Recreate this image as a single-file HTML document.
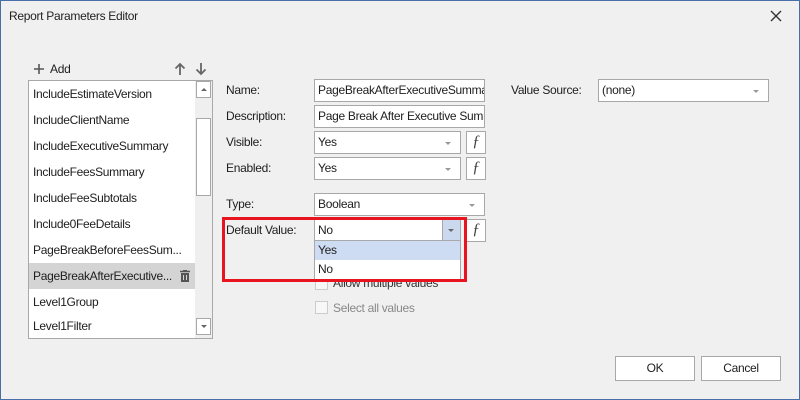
<!DOCTYPE html>
<html><head><style>
*{margin:0;padding:0;box-sizing:border-box}
body{width:800px;height:400px;background:#f0f0f0;font-family:"Liberation Sans",sans-serif;font-size:12px;letter-spacing:-0.3px;color:#202020;position:relative;overflow:hidden}
.a{position:absolute}
.frame{left:0;top:0;width:800px;height:400px;border:1px solid #4a6ea8}
.box{position:absolute;background:#fff;border:1px solid #a8a8a8;height:23px;line-height:21px;padding-left:3px;white-space:nowrap;overflow:hidden}
.dd::after{content:"";position:absolute;right:9px;top:10px;border-left:3px solid transparent;border-right:3px solid transparent;border-top:3px solid #999}
.fb{position:absolute;width:20px;height:23px;background:#fff;border:1px solid #a8a8a8;font-family:"Liberation Serif",serif;font-style:italic;font-size:16px;text-align:center;line-height:20px;color:#444}
.lbl{position:absolute;left:226px}
.it{position:absolute;left:29px;width:166px;height:26px;line-height:26px;padding-left:4px;white-space:nowrap}
.btn{position:absolute;top:356px;width:80px;height:25px;background:#fff;border:1px solid #a8a8a8;text-align:center;line-height:23px}
.cb{position:absolute;left:315px;width:13px;height:13px;border:1px solid #ccc;background:#f7f7f7}
</style></head><body>
<div class="a frame"></div>
<div class="a" style="left:9px;top:9px;color:#222">Report Parameters Editor</div>
<svg class="a" style="left:769px;top:9px" width="14" height="14"><path d="M2 2L12 12M12 2L2 12" stroke="#333" stroke-width="1.4"/></svg>

<svg class="a" style="left:33px;top:63px" width="12" height="12"><path d="M6 1V11M1 6H11" stroke="#555" stroke-width="1.6"/></svg>
<div class="a" style="left:50px;top:62px">Add</div>
<svg class="a" style="left:174px;top:62px" width="12" height="14"><path d="M6 13V2M1.5 6.5L6 2L10.5 6.5" stroke="#666" stroke-width="1.8" fill="none"/></svg>
<svg class="a" style="left:195px;top:62px" width="12" height="14"><path d="M6 1V12M1.5 7.5L6 12L10.5 7.5" stroke="#666" stroke-width="1.8" fill="none"/></svg>

<div class="a" style="left:28px;top:80px;width:185px;height:259px;background:#fff;border:1px solid #a8a8a8"></div>
<div class="a" style="left:195px;top:81px;width:17px;height:257px;background:#efefef"></div>
<div class="a" style="left:196px;top:81px;width:15px;height:17px;border:1px solid #a8a8a8;background:#fff"></div>
<div class="a" style="left:201px;top:88px;border-left:3px solid transparent;border-right:3px solid transparent;border-bottom:3px solid #666"></div>
<div class="a" style="left:196px;top:118px;width:15px;height:78px;border:1px solid #a8a8a8;background:#fff"></div>
<div class="a" style="left:196px;top:318px;width:15px;height:17px;border:1px solid #a8a8a8;background:#fff"></div>
<div class="a" style="left:201px;top:325px;border-left:3px solid transparent;border-right:3px solid transparent;border-top:3px solid #666"></div>

<div class="it" style="top:81px">IncludeEstimateVersion</div>
<div class="it" style="top:107px">IncludeClientName</div>
<div class="it" style="top:133px">IncludeExecutiveSummary</div>
<div class="it" style="top:159px">IncludeFeesSummary</div>
<div class="it" style="top:185px">IncludeFeeSubtotals</div>
<div class="it" style="top:211px">Include0FeeDetails</div>
<div class="it" style="top:237px">PageBreakBeforeFeesSum...</div>
<div class="it" style="top:263px;background:#d4d4d4">PageBreakAfterExecutive...</div>
<svg class="a" style="left:180px;top:270px" width="10" height="12"><path d="M0 1.5H10M3 0H7" stroke="#555" stroke-width="1.5"/><rect x="1" y="3" width="8" height="9" fill="#555"/><path d="M3.5 5V10M6.5 5V10" stroke="#d4d4d4" stroke-width="1"/></svg>
<div class="it" style="top:289px">Level1Group</div>
<div class="it" style="top:313px">Level1Filter</div>

<div class="lbl" style="top:83px">Name:</div>
<div class="lbl" style="top:109px">Description:</div>
<div class="lbl" style="top:135px">Visible:</div>
<div class="lbl" style="top:161px">Enabled:</div>
<div class="lbl" style="top:197px">Type:</div>
<div class="lbl" style="top:223px">Default Value:</div>

<div class="box" style="left:314px;top:79px;width:171px">PageBreakAfterExecutiveSummary</div>
<div class="box" style="left:314px;top:105px;width:171px">Page Break After Executive Summary</div>
<div class="box dd" style="left:314px;top:131px;width:147px">Yes</div><div class="fb" style="left:466px;top:131px">ƒ</div>
<div class="box dd" style="left:314px;top:157px;width:147px">Yes</div><div class="fb" style="left:466px;top:157px">ƒ</div>
<div class="box dd" style="left:314px;top:193px;width:171px">Boolean</div>
<div class="box" style="left:314px;top:219px;width:147px">No</div>
<div class="a" style="left:442px;top:220px;width:18px;height:21px;background:#cbd9ee;border-left:1px solid #a8a8a8"></div>
<div class="a" style="left:448px;top:229px;border-left:3px solid transparent;border-right:3px solid transparent;border-top:3px solid #666"></div>
<div class="fb" style="left:466px;top:219px">ƒ</div>

<div class="cb" style="top:277px"></div>
<div class="a" style="left:333px;top:276px;color:#333">Allow multiple values</div>
<div class="cb" style="top:301px"></div>
<div class="a" style="left:333px;top:301px;color:#888">Select all values</div>

<div class="a" style="left:314px;top:240px;width:147px;height:40px;background:#fff;border:1px solid #a8a8a8"></div>
<div class="a" style="left:315px;top:241px;width:145px;height:19px;background:#cddcf2;padding-left:3px;line-height:19px">Yes</div>
<div class="a" style="left:315px;top:260px;width:145px;height:19px;padding-left:3px;line-height:19px">No</div>

<div class="a" style="left:222px;top:217px;width:245px;height:65px;border:3px solid #e8141f"></div>

<div class="a" style="left:511px;top:83px">Value Source:</div>
<div class="box dd" style="left:598px;top:79px;width:171px">(none)</div>

<div class="btn" style="left:615px">OK</div>
<div class="btn" style="left:701px">Cancel</div>
</body></html>
